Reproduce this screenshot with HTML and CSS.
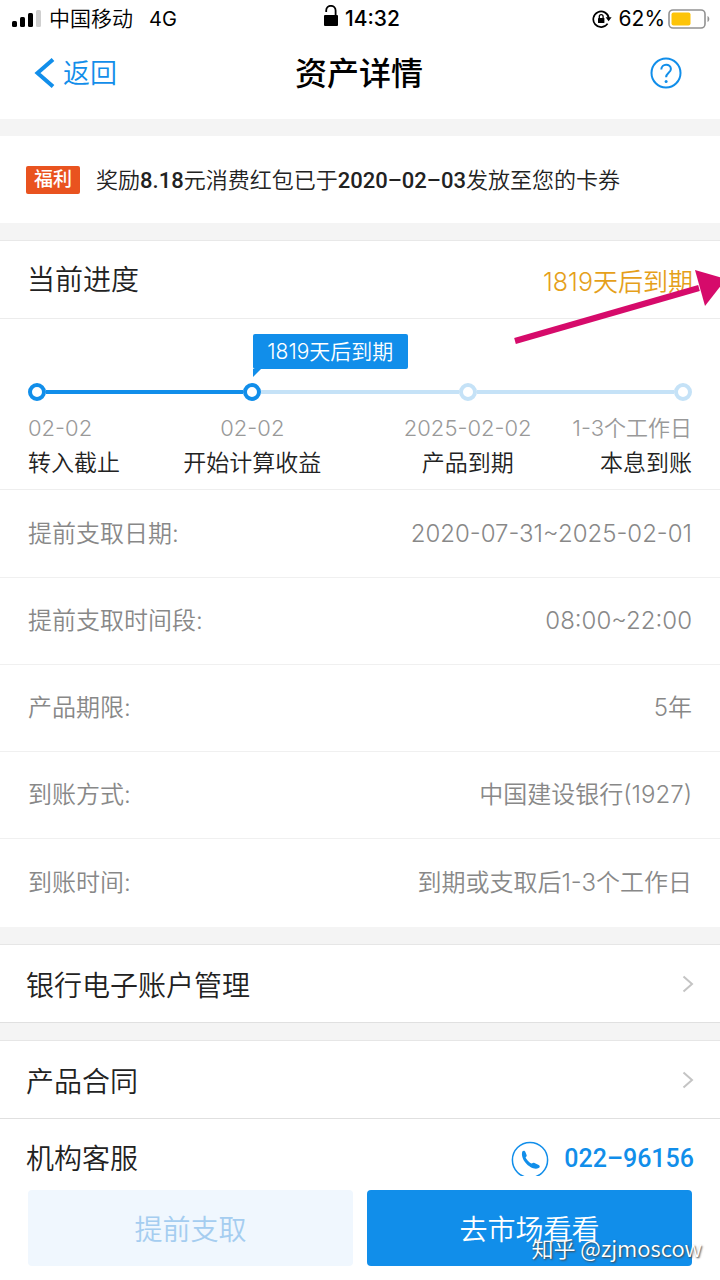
FILE: index.html
```html
<!DOCTYPE html>
<html lang="zh-CN">
<head>
<meta charset="utf-8">
<meta name="viewport" content="width=device-width, initial-scale=1">
<title>资产详情</title>
<link rel="stylesheet" href="styles.css">
</head>
<body>
<div class="page">
  <div class="status">
    <div class="status-left">
      <svg width="30" height="18" viewBox="0 0 30 18" aria-hidden="true"><rect x="0" y="11" width="5" height="6" rx="1.5"/><rect x="8" y="7" width="5" height="10" rx="1.5"/><rect x="16" y="3" width="5" height="14" rx="1.5"/><rect x="24" y="0" width="5" height="17" rx="1.5" fill="#cfcfcf"/></svg>
      <span class="carrier">中国移动</span><span>4G</span>
    </div>
    <div class="status-time">
      <svg width="16" height="22" viewBox="0 0 16 22" aria-hidden="true"><rect x="1" y="10" width="14" height="11" rx="1"/><path d="M3.2 7V5.5a4.7 4.7 0 0 1 9.4 0V11" fill="none" stroke="#000" stroke-width="1.8"/></svg>
      <span>14:32</span>
    </div>
    <div class="status-right">
      <svg class="rotation" width="20" height="20" viewBox="0 0 20 20" aria-hidden="true"><path d="M15.6 14.6A7.8 7.8 0 1 1 16.8 9" fill="none" stroke="#000" stroke-width="1.7"/><path d="M13.6 8.3h6l-3 4z"/><rect x="6" y="9" width="6.4" height="5" rx=".6"/><path d="M7.3 9V7.5a1.9 1.9 0 0 1 3.8 0V9" fill="none" stroke="#000" stroke-width="1.3"/></svg>
      <span>62%</span>
      <svg width="43" height="20" viewBox="0 0 43 20" aria-hidden="true"><rect x="1" y="1" width="36" height="18" rx="4" fill="#fff" stroke="#929292" stroke-width="1.6"/><rect x="3.5" y="3.5" width="19" height="13" rx="2" fill="#fdc408"/><path d="M39.5 7c2.4.8 2.4 5.2 0 6z" fill="#929292"/></svg>
    </div>
  </div>

  <header class="nav">
    <a class="back" href="#"><svg width="21" height="30" viewBox="0 0 21 30" aria-hidden="true"><path d="M19 1.500 3.500 15l15.500 13.500" fill="none" stroke="#118eea" stroke-width="4"/></svg><span>返回</span></a>
    <h1>资产详情</h1>
    <button class="help" type="button" aria-label="帮助"><svg width="32" height="32" viewBox="0 0 32 32" aria-hidden="true"><circle cx="16" cy="16" r="14.500" fill="none" stroke="#118eea" stroke-width="2"/><path d="M11.300 12.500c0-6.300 9.600-6.300 9.600-.5 0 3.800-4.800 3.900-4.800 8.300" fill="none" stroke="#118eea" stroke-width="2"/><circle cx="16.100" cy="24.500" r="1.500" fill="#118eea"/></svg></button>
  </header>

  <main>
    <section class="notice"><span class="tag">福利</span><p>奖励<b>8.18</b>元消费红包已于<b>2020–02–03</b>发放至您的卡券</p></section>

    <section class="card">
      <div class="card-head"><h2>当前进度</h2><span class="remain">1819天后到期</span></div>
      <div class="timeline">
        <div class="track">
          <span class="node done"></span><span class="line done"></span>
          <span class="node done"><span class="bubble">1819天后到期</span></span><span class="line"></span>
          <span class="node"></span><span class="line"></span>
          <span class="node"></span>
        </div>
        <ol class="steps">
          <li><span class="date">02-02</span><span>转入截止</span></li>
          <li><span class="date">02-02</span><span>开始计算收益</span></li>
          <li><span class="date">2025-02-02</span><span>产品到期</span></li>
          <li><span class="date">1-3个工作日</span><span>本息到账</span></li>
        </ol>
      </div>
      <dl class="details">
        <div class="row"><dt>提前支取日期:</dt><dd>2020-07-31~2025-02-01</dd></div>
        <div class="row"><dt>提前支取时间段:</dt><dd>08:00~22:00</dd></div>
        <div class="row"><dt>产品期限:</dt><dd>5年</dd></div>
        <div class="row"><dt>到账方式:</dt><dd>中国建设银行(1927)</dd></div>
        <div class="row"><dt>到账时间:</dt><dd>到期或支取后1-3个工作日</dd></div>
      </dl>
    </section>

    <a class="link" href="#"><span>银行电子账户管理</span><svg width="12" height="18" viewBox="0 0 12 18" aria-hidden="true"><path d="M1.500 1.500 10 9l-8.500 7.500" fill="none" stroke="#c4c4c4" stroke-width="2"/></svg></a>
    <a class="link" href="#"><span>产品合同</span><svg width="12" height="18" viewBox="0 0 12 18" aria-hidden="true"><path d="M1.500 1.500 10 9l-8.500 7.500" fill="none" stroke="#c4c4c4" stroke-width="2"/></svg></a>

    <section class="service">
      <h2>机构客服</h2>
      <a class="phone" href="tel:02296156"><svg width="38" height="35" viewBox="0 0 38 35" aria-hidden="true"><circle cx="19" cy="19" r="17.600" fill="none" stroke="#118eea" stroke-width="1.500"/><path d="M11.300 10.600c1.300-1.500 2.700-.9 3.300.8l1 2.600c.4 1.200-.2 1.700-.9 2.300-.7.800 4.800 6.700 6.100 6.300 1-.8 1.700-1.100 2.700-.6l4.200 1.900c1.600.9 1.300 2.300-.1 3.200-7.200 3.200-18.900-8-16.300-16.500z" fill="#118eea"/></svg><span>022–96156</span></a>
    </section>
  </main>

  <footer class="actions">
    <button type="button" disabled>提前支取</button>
    <button class="primary" type="button">去市场看看</button>
  </footer>

  <svg class="arrow" width="206" height="76" viewBox="0 0 206 76" aria-hidden="true"><path d="M1 71 185 18" fill="none" stroke="#d60b6b" stroke-width="6"/><path d="M181 0 212 9 191 36z" fill="#d60b6b"/></svg>
  <span class="watermark">知乎 @zjmoscow</span>
</div>
</body>
</html>
```
FILE: styles.css
```css
* { box-sizing: border-box; }
body { margin: 0; background: #fff; color: #222; font-family: Inter, "Noto Sans CJK SC", sans-serif; font-weight: 350; }
h1, h2, p, dl, dd, ol { margin: 0; padding: 0; }
a { color: inherit; text-decoration: none; }
button { border: 0; padding: 0; background: none; font: inherit; }
svg { display: block; flex: none; }

.page { position: relative; overflow: hidden; background: #fff; }

.status { display: grid; grid-template-columns: 1fr auto 1fr; align-items: center; height: 37px; padding: 0 9px 0 12px; color: #000; font-size: 21px; font-weight: 400; line-height: 24px; }
.status-left, .status-time, .status-right { display: flex; align-items: center; }
.status-left { gap: 7px; font-size: 20px; }
.carrier { margin-right: 9px; font-size: 21px; font-weight: 350; }
.status-time { gap: 6px; font-size: 21px; font-weight: 500; }
.status-time svg { margin-bottom: 5px; }
.status-right { justify-content: flex-end; gap: 3px; }
.rotation { margin-right: 4px; }

.nav { display: grid; grid-template-columns: 1fr auto 1fr; align-items: center; height: 82px; padding: 0 38px 10px 34px; }
.back { display: flex; align-items: center; gap: 8px; color: #118eea; font-size: 27px; line-height: 32px; }
.back span { padding-top: 2px; }
h1 { padding: 2px 0 0 2px; color: #000; font-size: 32px; font-weight: 500; line-height: 40px; }
.help { justify-self: end; }

main { display: flex; flex-direction: column; }
.notice { display: flex; align-items: center; gap: 16px; min-height: 121px; padding: 0 26px; border: solid #f4f4f4; border-width: 17px 0; font-family: Roboto, "Noto Sans CJK SC", sans-serif; font-size: 22px; line-height: 30px; }
.notice p { padding-top: 2px; }
.notice b { font-weight: 500; }
.tag { padding: 0 8px; border-radius: 2px; background: #e9531f; color: #fff; font-size: 19px; font-weight: 500; line-height: 28px; }

h2 { font-size: 28px; font-weight: 350; line-height: 36px; }
.card { border-top: 1px solid #e8e8e8; }
.card-head { display: flex; justify-content: space-between; align-items: center; height: 78px; padding: 0 27px; border-bottom: 1px solid #ececec; }
.remain { color: #e5a01a; font-size: 25px; }

.timeline { padding: 64px 28px 8px; border-bottom: 1px solid #eee; }
.track { display: flex; align-items: center; }
.node { position: relative; flex: none; width: 18px; height: 18px; border: 4px solid #c5e2f7; border-radius: 50%; }
.line { flex: 1; height: 4px; background: #c5e2f7; }
.node.done { border-color: #118eea; }
.line.done { background: #118eea; }
.bubble { position: absolute; left: 6px; bottom: 28px; padding: 0 15px 0 14px; border-radius: 2px; background: #118eea; color: #fff; font-size: 21px; line-height: 35px; white-space: nowrap; }
.bubble::after { content: ""; position: absolute; left: 0; top: 100%; border-top: 8px solid #118eea; border-right: 8px solid transparent; }
.steps { display: flex; padding-top: 10px; list-style: none; font-size: 23px; line-height: 35px; white-space: nowrap; }
.steps li { display: flex; flex: 2 0 0; flex-direction: column; align-items: center; min-width: 0; }
.steps li:first-child { flex: 1 0 9px; align-items: flex-start; }
.steps li:last-child { flex: 1 0 9px; align-items: flex-end; }
.date { color: #999; font-size: 22px; }

.details { padding: 1px 0; color: #888; font-size: 24px; line-height: 32px; }
.row { display: flex; justify-content: space-between; align-items: center; height: 87px; padding: 0 28px; border-bottom: 1px solid #f0f0f0; }
.row:last-child { border-bottom: 0; }

.link { display: flex; justify-content: space-between; align-items: center; height: 96px; padding: 0 26px; border-top: 17px solid #f4f4f4; box-shadow: inset 0 1px #e6e6e6, inset 0 -1px #e0e0e0; font-size: 28px; }
.service { display: flex; justify-content: space-between; align-items: center; height: 71px; padding: 8px 26px 0; }
.phone { display: flex; align-items: center; gap: 15px; color: #118eea; font-family: Roboto, sans-serif; font-size: 25px; font-weight: 500; }

.actions { display: grid; grid-template-columns: 1fr 1fr; gap: 14px; padding: 0 28px 14px; }
.actions button { height: 76px; border-radius: 4px; background: #f0f7fe; color: #a5cdf0; font-size: 28px; }
.actions .primary { background: #118eea; color: #fff; }

.arrow { position: absolute; top: 270px; right: 0; }
.watermark { position: absolute; right: 18px; bottom: 18px; color: #fff; font-family: "Noto Sans CJK SC", sans-serif; font-size: 22px; font-weight: 350; line-height: 30px; text-shadow: 1px 1px 2px #444; }
```
